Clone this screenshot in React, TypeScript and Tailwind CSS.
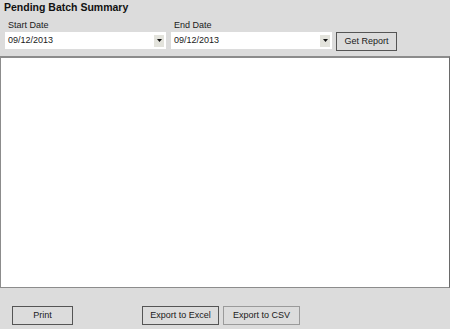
import { useState } from "react"

const font = { fontFamily: '"Liberation Sans", Arial, sans-serif' }

function DateBox({ label, value }: { label: string; value: string }) {
  return (
    <div className="flex flex-col">
      <span className="text-[9px] leading-[11px] text-[#1a1a1a] pl-[3px] mb-[1px]">{label}</span>
      <div className="flex items-center w-[161px] h-[17px] bg-white pl-[3px] pr-[2px]">
        <span className="flex-1 text-[9px] leading-[11px] text-[#1a1a1a]">{value}</span>
        <div className="w-[10px] h-[12px] bg-[#e3e3dc] flex items-center justify-center">
          <svg width="5" height="3" viewBox="0 0 5 3">
            <path d="M0 0H5L2.5 3Z" fill="#111" />
          </svg>
        </div>
      </div>
    </div>
  )
}

function Btn({ children, w, light }: { children: string; w: string; light?: boolean }) {
  return (
    <button
      className={`${w} h-[19px] bg-[#dcdcdc] border text-[9px] leading-[11px] text-[#1a1a1a] ${
        light ? "border-[#9a9a9a]" : "border-[#555555]"
      }`}
    >
      {children}
    </button>
  )
}

export default function App() {
  const [start] = useState("09/12/2013")
  const [end] = useState("09/12/2013")

  return (
    <div className="w-[450px] h-[329px] bg-[#dcdcdc] flex flex-col" style={font}>
      <h1 className="text-[10.5px] leading-[13px] font-bold text-[#111] pl-[4px] pt-[1px]">Pending Batch Summary</h1>
      <div className="flex items-end pl-[5px] mt-[6px] gap-[5px]">
        <DateBox label="Start Date" value={start} />
        <DateBox label="End Date" value={end} />
        <div className="ml-[-1px] mb-[-2px]">
          <Btn w="w-[61px]">Get Report</Btn>
        </div>
      </div>
      <div className="mt-[7px] h-[232px] bg-white border border-t-2 border-[#8c8c8c] border-r-[#6a6a6a]" />
      <div className="flex items-center mt-[18px] pl-[12px]">
        <Btn w="w-[61px]">Print</Btn>
        <div className="ml-[69px] flex gap-[4px]">
          <Btn w="w-[77px]">Export to Excel</Btn>
          <Btn w="w-[77px]" light>
            Export to CSV
          </Btn>
        </div>
      </div>
    </div>
  )
}
